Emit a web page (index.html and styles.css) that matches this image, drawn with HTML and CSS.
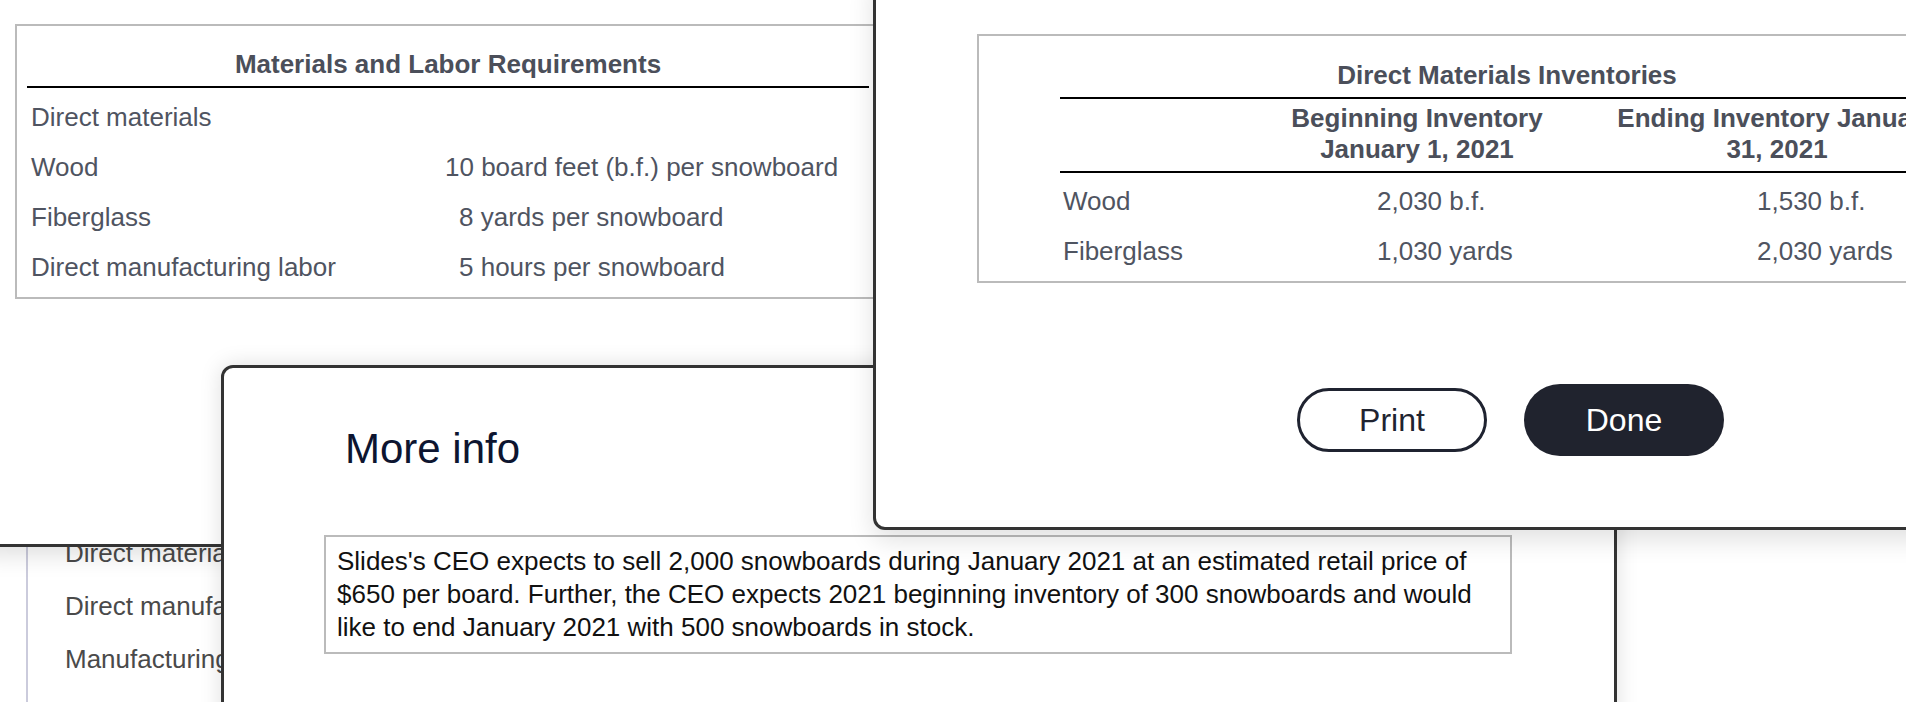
FILE: index.html
```html
<!DOCTYPE html>
<html lang="en">
<head>
  <meta charset="UTF-8">
  <title>More info</title>
  <link rel="stylesheet" href="styles.css">
</head>
<body>
  <!-- page underneath all dialogs -->
  <div class="page">
    <div class="page-table">
      <div class="page-row">Direct materials</div>
      <div class="page-row">Direct manufacturing labor</div>
      <div class="page-row">Manufacturing overhead</div>
    </div>
  </div>

  <!-- first dialog: requirements -->
  <section class="sheet sheet-back">
    <div class="req-box">
      <div class="req-title">Materials and Labor Requirements</div>
      <div class="req-row first"><span>Direct materials</span><span></span></div>
      <div class="req-row"><span>Wood</span><span>10 board feet (b.f.) per snowboard</span></div>
      <div class="req-row"><span>Fiberglass</span><span class="indent">8 yards per snowboard</span></div>
      <div class="req-row"><span>Direct manufacturing labor</span><span class="indent">5 hours per snowboard</span></div>
    </div>
  </section>

  <!-- second dialog: more info -->
  <section class="sheet sheet-info">
    <h2 class="info-title">More info</h2>
    <div class="info-box">Slides's CEO expects to sell 2,000 snowboards during January 2021 at an estimated retail price of $650 per board. Further, the CEO expects 2021 beginning inventory of 300 snowboards and would like to end January 2021 with 500 snowboards in stock.</div>
  </section>

  <!-- top dialog: inventories -->
  <section class="sheet sheet-front">
    <div class="inv-box">
      <div class="inv-title">Direct Materials Inventories</div>
      <div class="inv-head">
        <span></span>
        <span>Beginning Inventory<br>January 1, 2021</span>
        <span>Ending Inventory January<br>31, 2021</span>
      </div>
      <div class="inv-row first"><span>Wood</span><span class="c2">2,030 b.f.</span><span class="c3">1,530 b.f.</span></div>
      <div class="inv-row"><span>Fiberglass</span><span class="c2">1,030 yards</span><span class="c3">2,030 yards</span></div>
    </div>
    <div class="buttons">
      <button class="btn btn-outline">Print</button>
      <button class="btn btn-dark">Done</button>
    </div>
  </section>
</body>
</html>
```

FILE: styles.css
```css
:root {
  --frame: #333;
  --cell-border: #bbb;
  --table-text: #4f5461;
  --dark: #20232e;
}

* {
  box-sizing: border-box;
}

html, body {
  margin: 0;
  width: 1906px;
  height: 702px;
  overflow: hidden;
}

body {
  position: relative;
  background: #fff;
  font-family: 'Liberation Sans', Arial, Helvetica, sans-serif;
}

/* page behind dialogs */
.page {
  padding: 527px 0 0 26px;
}

.page-table {
  border-left: 2px solid #cbcbdc;
  min-height: 240px;
}

.page-row {
  padding-left: 37px;
  height: 53px;
  line-height: 53px;
  font-size: 26px;
  color: #4a4a4a;
  white-space: nowrap;
}

/* dialog frames */
.sheet {
  position: absolute;
  background: #fff;
  border: 3px solid var(--frame);
  border-radius: 12px;
}

.sheet-back {
  left: -20px;
  top: -20px;
  width: 1400px;
  height: 567px;
  padding: 41px 0 0 32px;
  box-shadow: 0 8px 24px rgba(0,0,0,0.13);
  z-index: 1;
}

.sheet-info {
  left: 221px;
  top: 365px;
  width: 1396px;
  height: 420px;
  padding: 57px 102px 0 100px;
  box-shadow: 0 0 22px rgba(0,0,0,0.13);
  z-index: 2;
}

.sheet-front {
  left: 873px;
  top: -30px;
  width: 1268px;
  height: 560px;
  padding: 61px 101px 0;
  box-shadow: 0 10px 26px rgba(0,0,0,0.12);
  z-index: 3;
}

/* requirements table */
.req-box {
  width: 866px;
  border: 2px solid var(--cell-border);
  padding: 23px 10px 5px;
  color: var(--table-text);
  font-size: 26px;
}

.req-title, .inv-title {
  text-align: center;
  font-weight: 700;
  line-height: 30px;
  padding-bottom: 7px;
  border-bottom: 2px solid #000;
  color: #4b4f5a;
}

.req-row {
  display: grid;
  grid-template-columns: 418px 1fr;
  height: 50px;
  line-height: 50px;
  white-space: nowrap;
}

.req-row.first {
  margin-top: 4px;
}

.req-row span:first-child {
  padding-left: 4px;
}

.req-row .indent {
  padding-left: 14px;
}

/* inventories table */
.inv-box {
  border: 2px solid var(--cell-border);
  padding: 24px 81px 5px;
  color: var(--table-text);
  font-size: 26px;
}

.inv-head, .inv-row {
  display: grid;
  grid-template-columns: 174px 366px 354px;
  white-space: nowrap;
}

.inv-head {
  padding: 4px 0 6px;
  line-height: 31px;
  font-weight: 700;
  text-align: center;
  color: #4b4f5a;
  border-bottom: 2px solid #000;
}

.inv-row {
  height: 50px;
  line-height: 50px;
}

.inv-row.first {
  margin-top: 3px;
}

.inv-row span:first-child {
  padding-left: 3px;
}

.inv-row .c2 {
  padding-left: 143px;
}

.inv-row .c3 {
  padding-left: 157px;
}

.buttons {
  display: flex;
  justify-content: center;
  align-items: center;
  gap: 37px;
  margin-top: 101px;
  padding-left: 7px;
}

.btn {
  font-family: inherit;
  font-size: 32px;
  cursor: pointer;
  padding: 0;
}

.btn-outline {
  width: 190px;
  height: 64px;
  border: 3px solid #1f2330;
  border-radius: 32px;
  background: #fff;
  color: #1f2330;
}

.btn-dark {
  width: 200px;
  height: 72px;
  border: none;
  border-radius: 36px;
  background: var(--dark);
  color: #fff;
}

/* more info */
.info-title {
  margin: 0 0 62px 21px;
  font-size: 42px;
  line-height: 48px;
  font-weight: 400;
  color: #0d1530;
}

.info-box {
  border: 2px solid var(--cell-border);
  padding: 8px 11px;
  font-size: 26px;
  line-height: 33px;
  color: #111;
}
```
